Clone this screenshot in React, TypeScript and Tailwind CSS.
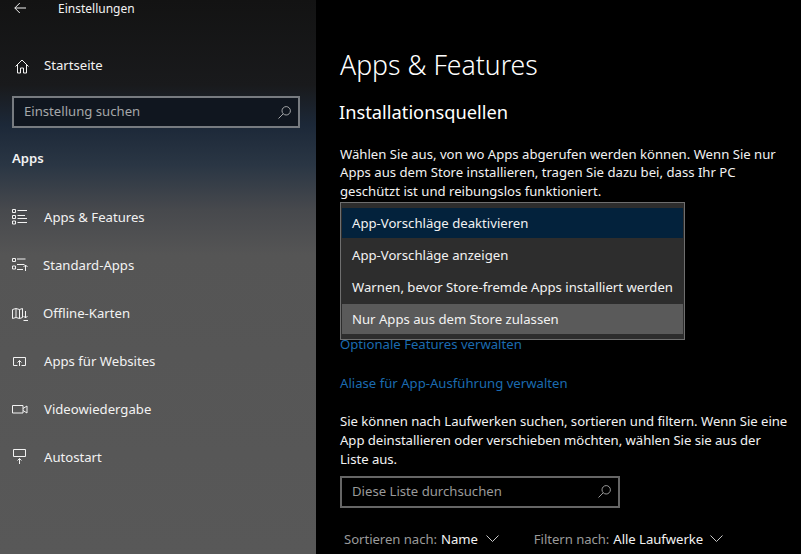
import { ReactNode } from "react";

const font = { fontFamily: '"Noto Sans", sans-serif' };

function Icon({ d, w = 16 }: { d: string; w?: number }) {
  return (
    <svg width={w} height={w} viewBox={`0 0 ${w} ${w}`} fill="none" stroke="currentColor" strokeWidth="1" className="overflow-visible">
      <path d={d} />
    </svg>
  );
}

function SearchGlyph() {
  return (
    <svg width="13" height="13" viewBox="0 0 13 13" fill="none" stroke="currentColor" strokeWidth="1">
      <circle cx="8.200" cy="4.800" r="4.200" />
      <path d="M5.200 7.800.5 12.500" />
    </svg>
  );
}

function Chevron() {
  return (
    <svg width="13" height="7" viewBox="0 0 13 7" fill="none" stroke="#c8c8c8" strokeWidth="1">
      <path d="M.5.5 6.500 6.500 12.500.5" />
    </svg>
  );
}

const navItems: { label: string; icon: ReactNode; gap: string }[] = [
  {
    label: "Apps & Features",
    gap: "ml-[16px]",
    icon: <Icon d="M.5-.5h3v3h-3zM.5 5.500h3v3h-3zM.5 11h3v3h-3zM5.500.5h9.500M5.500 5.500h7.500M5.500 8.500h9.500M5.500 12.500h9.500" />,
  },
  {
    label: "Standard-Apps",
    gap: "ml-[15px]",
    icon: <Icon d="M.5.5h3v3h-3zM.5 8h3v3h-3zM5 1h8.500M5 6.500h7.500M5 11.500h6M13.500 13V7M11.500 9l2-2 2 2" />,
  },
  {
    label: "Offline-Karten",
    gap: "ml-[15px]",
    icon: <Icon d="M.5 3.500 4 2.500l3.500 1 3-1v9l-3 1-3.500-1-3.500 1zM4 2.500v9M7.500 3.500v9M13.500 5v7M11.500 10l2 2 2-2M11.500 14.500h4.500" />,
  },
  {
    label: "Apps für Websites",
    gap: "ml-[16px]",
    icon: <Icon d="M5.500 11.500h-4v-8h12v8h-4M7.500 12V6.500M5.500 8.500l2-2 2 2" />,
  },
  {
    label: "Videowiedergabe",
    gap: "ml-[16px]",
    icon: <Icon d="M.5 3.500h10.500v7.500H.5zM11 6.500l4-2.500v7l-4-2.500" />,
  },
  {
    label: "Autostart",
    gap: "ml-[16px]",
    icon: <Icon d="M1.500-.5h12v7h-12zM7.500 14V8.500M5.500 10.500l2-2 2 2" />,
  },
];

const options = [
  { label: "App-Vorschläge deaktivieren", cls: "bg-[#03223c]" },
  { label: "App-Vorschläge anzeigen", cls: "" },
  { label: "Warnen, bevor Store-fremde Apps installiert werden", cls: "" },
  { label: "Nur Apps aus dem Store zulassen", cls: "bg-[#5a5a5a]" },
];

export default function App() {
  return (
    <div className="flex h-[554px] w-[801px] overflow-hidden bg-black text-[13.15px] text-white" style={font}>
      {/* Sidebar */}
      <aside className="h-full w-[316px] shrink-0 bg-[linear-gradient(180deg,#131313_0px,#191a1c_85px,#1c2838_125px,#2a3644_165px,#47494d_210px,#555555_255px,#585858_554px)] text-[#f2f2f2]">
        <div className="flex h-[18px] items-center pl-[14px] text-[12px]">
          <svg width="12" height="12" viewBox="0 0 12 12" fill="none" stroke="currentColor" strokeWidth="1" className="-mt-[2px]">
            <path d="M12 6H.8M5.800 1 .8 6l5 5" />
          </svg>
          <span className="ml-[32px]">Einstellungen</span>
        </div>
        <div className="mt-[35px] flex h-[24px] items-center pl-[15px] pt-[1px]">
          <Icon w={14} d="M.5 7.500 7 1l6.500 6.500M2.500 6v8h3V9h3v5h3V6" />
          <span className="ml-[15px]">Startseite</span>
        </div>
        <div className="mx-[12px] mt-[19px] flex h-[32px] w-[288px] items-center justify-between border-2 border-[#777b80] bg-[#10161f] pl-[10px] pr-[7px] text-[#a5a7a9]">
          <span>Einstellung suchen</span>
          <SearchGlyph />
        </div>
        <div className="mt-[20px] pl-[12px] font-semibold leading-[20px]">Apps</div>
        <nav className="mt-[26px]">
          {navItems.map((item) => (
            <div key={item.label} className="flex h-[48px] items-center pl-[12px]">
              <span className="w-[16px]">{item.icon}</span>
              <span className={item.gap}>{item.label}</span>
            </div>
          ))}
        </nav>
      </aside>

      {/* Main */}
      <main className="relative flex-1 pl-[24px] text-[#f2f2f2]">
        <h1 className="mt-[46px] text-[26.6px] font-light leading-[38px] text-white">Apps &amp; Features</h1>
        <h2 className="mt-[15px] -ml-[1px] text-[18.3px] leading-[26px] text-white">Installationsquellen</h2>
        <p className="mt-[20px] leading-[18.400px]">
          <span className="block">Wählen Sie aus, von wo Apps abgerufen werden können. Wenn Sie nur</span>
          <span className="block">Apps aus dem Store installieren, tragen Sie dazu bei, dass Ihr PC</span>
          <span className="block">geschützt ist und reibungslos funktioniert.</span>
        </p>

        <div className="relative h-[135px]">
          <div className="absolute left-0 top-[2px] z-10 h-[138px] w-[345px] border border-[#6f6f6f] bg-[#2d2d2d] px-[1px] py-[4px] text-[#f2f2f2]">
            {options.map((o) => (
              <div key={o.label} className={`my-[1px] mb-[2px] flex h-[30px] items-center whitespace-nowrap pl-[10px] pt-[1px] ${o.cls}`}>
                {o.label}
              </div>
            ))}
          </div>
        </div>

        <div className="leading-[18px] text-[#1b6bb0]">Optionale Features verwalten</div>
        <div className="mt-[21px] leading-[18px] text-[#1b6bb0]">Aliase für App-Ausführung verwalten</div>

        <p className="mt-[20px] leading-[18.800px] tracking-[-0.04px]">
          <span className="block">Sie können nach Laufwerken suchen, sortieren und filtern. Wenn Sie eine</span>
          <span className="block">App deinstallieren oder verschieben möchten, wählen Sie sie aus der</span>
          <span className="block">Liste aus.</span>
        </p>

        <div className="mt-[7px] flex h-[32px] w-[280px] items-center justify-between border-2 border-[#666666] pl-[10px] pr-[7px] text-[#9a9a9a]">
          <span>Diese Liste durchsuchen</span>
          <SearchGlyph />
        </div>

        <div className="mt-[22px] flex items-center pl-[4px] leading-[18px] tracking-[-0.05px]">
          <span className="text-[#9a9a9a]">Sortieren nach:</span>
          <span className="ml-[4px]">Name</span>
          <span className="ml-[8px]"><Chevron /></span>
          <span className="ml-[35px] text-[#9a9a9a]">Filtern nach:</span>
          <span className="ml-[4px]">Alle Laufwerke</span>
          <span className="ml-[7px]"><Chevron /></span>
        </div>
      </main>
    </div>
  );
}
